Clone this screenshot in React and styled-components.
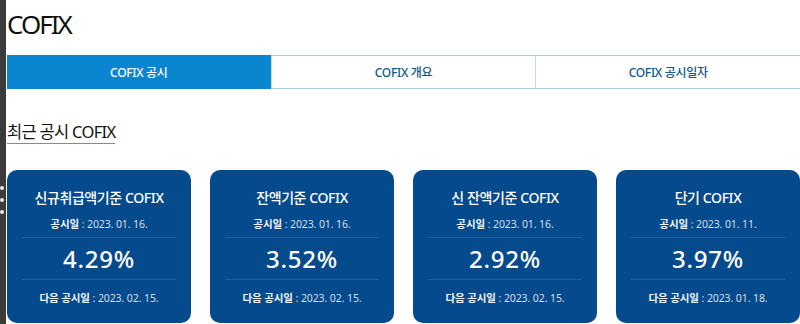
import React from 'react';
import styled, { createGlobalStyle } from 'styled-components';

const GlobalStyle = createGlobalStyle`
  html, body {
    margin: 0;
    padding: 0;
    background: #ffffff;
    overflow: hidden;
  }
  body {
    font-family: "Noto Sans", "Noto Sans CJK KR", sans-serif;
  }
`;

const Page = styled.div`
  display: flex;
  width: 800px;
  height: 324px;
  overflow: hidden;
`;

const SideBar = styled.div`
  position: relative;
  width: 6px;
  flex-shrink: 0;
  background: #3b3b3b;
`;

const Dots = styled.div`
  position: absolute;
  top: 186px;
  left: 0;
  display: flex;
  flex-direction: column;
  gap: 8px;
`;

const Dot = styled.span`
  width: 4px;
  height: 4px;
  border-radius: 50%;
  background: #e8e8e8;
`;

const Main = styled.div`
  flex: 1;
  padding-left: 1px;
`;

const Title = styled.h1`
  margin: 0;
  height: 55px;
  padding-top: 5px;
  box-sizing: border-box;
  font-family: "Noto Sans", "Noto Sans CJK KR", sans-serif;
  font-size: 26px;
  font-weight: 400;
  letter-spacing: -2px;
  line-height: 38px;
  color: #111;
`;

const Tabs = styled.div`
  display: flex;
  height: 34px;
  border-top: 1px solid #a9cfe2;
  border-bottom: 1px solid #a9cfe2;
  box-sizing: border-box;
`;

const Tab = styled.div`
  flex: 1;
  display: flex;
  align-items: center;
  justify-content: center;
  font-size: 12px;
  font-weight: 500;
  letter-spacing: -0.3px;
  background: ${({ active }) => (active ? '#0a85d0' : '#fff')};
  color: ${({ active }) => (active ? '#fff' : '#0e5a8a')};
  border-left: ${({ first }) => (first ? 'none' : '1px solid #c6e0ec')};
  margin: ${({ active }) => (active ? '-1px 0' : '0')};
`;

const Section = styled.div`
  padding-top: 32px;
`;

const Heading = styled.h2`
  display: inline-block;
  margin: 0;
  font-size: 16.5px;
  font-weight: 400;
  letter-spacing: -0.7px;
  line-height: 22px;
  color: #111;
  border-bottom: 1px solid #8a8a8a;
`;

const Cards = styled.div`
  display: grid;
  grid-template-columns: repeat(4, 184px);
  column-gap: 19px;
  margin-top: 26px;
`;

const Card = styled.div`
  height: 153px;
  background: #054a8c;
  border-radius: 10px;
  padding: 17px 15px 0;
  box-sizing: border-box;
  color: #fff;
  text-align: center;
`;

const CardTitle = styled.div`
  font-size: 14px;
  font-weight: 500;
  letter-spacing: -0.4px;
  line-height: 22px;
`;

const DateLine = styled.div`
  font-size: 10.5px;
  color: #d4dfea;
  line-height: 14px;
  padding: ${({ top }) => (top ? '8px 0 6px' : '11px 0 0')};
  letter-spacing: -0.1px;

  b {
    font-weight: 600;
    color: #f2f6fa;
  }
`;

const Rate = styled.div`
  border-top: 1px solid #1e5f9f;
  border-bottom: 1px solid #1e5f9f;
  height: 41px;
  display: flex;
  align-items: center;
  justify-content: center;
  font-size: 24px;
  font-weight: 500;
  letter-spacing: 0.8px;
`;

const cofix = [
  { name: '신규취급액기준 COFIX', date: '2023. 01. 16.', rate: '4.29%', next: '2023. 02. 15.' },
  { name: '잔액기준 COFIX', date: '2023. 01. 16.', rate: '3.52%', next: '2023. 02. 15.' },
  { name: '신 잔액기준 COFIX', date: '2023. 01. 16.', rate: '2.92%', next: '2023. 02. 15.' },
  { name: '단기 COFIX', date: '2023. 01. 11.', rate: '3.97%', next: '2023. 01. 18.' },
];

export default function App() {
  return (
    <>
      <GlobalStyle />
      <Page>
        <SideBar>
          <Dots>
            <Dot />
            <Dot />
            <Dot />
          </Dots>
        </SideBar>
        <Main>
          <Title>COFIX</Title>
          <Tabs>
            <Tab active first>COFIX 공시</Tab>
            <Tab>COFIX 개요</Tab>
            <Tab>COFIX 공시일자</Tab>
          </Tabs>
          <Section>
            <Heading>최근 공시 COFIX</Heading>
            <Cards>
              {cofix.map((c) => (
                <Card key={c.name}>
                  <CardTitle>{c.name}</CardTitle>
                  <DateLine top>
                    <b>공시일</b> : {c.date}
                  </DateLine>
                  <Rate>{c.rate}</Rate>
                  <DateLine>
                    <b>다음 공시일</b> : {c.next}
                  </DateLine>
                </Card>
              ))}
            </Cards>
          </Section>
        </Main>
      </Page>
    </>
  );
}
